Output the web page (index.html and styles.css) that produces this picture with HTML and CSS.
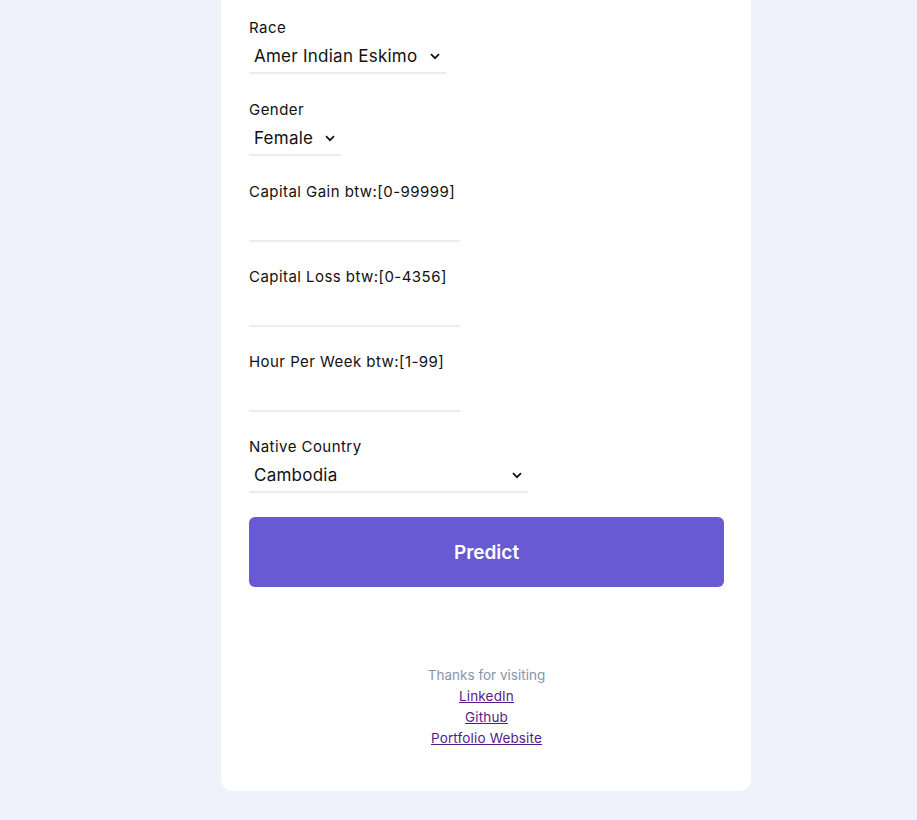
FILE: index.html
```html
<!DOCTYPE html>
<html lang="en">
<head>
<meta charset="utf-8">
<title>Income Predictor</title>
<link rel="stylesheet" href="styles.css">
</head>
<body>
<div class="page">
  <main class="card">
    <form class="form">
      <div class="field field-select">
        <label class="field-label" for="race">Race</label>
        <div class="select-wrap select-race">
          <select id="race" class="select">
            <option>Amer Indian Eskimo</option>
            <option>Asian Pac Islander</option>
            <option>Black</option>
            <option>Other</option>
            <option>White</option>
          </select>
          <svg class="chevron" viewBox="0 0 10 7" width="10" height="7"><path d="M1 1.2 L5 5.2 L9 1.2" fill="none" stroke="#111" stroke-width="1.7"/></svg>
        </div>
      </div>
      <div class="field field-select">
        <label class="field-label" for="gender">Gender</label>
        <div class="select-wrap select-gender">
          <select id="gender" class="select">
            <option>Female</option>
            <option>Male</option>
          </select>
          <svg class="chevron" viewBox="0 0 10 7" width="10" height="7"><path d="M1 1.2 L5 5.2 L9 1.2" fill="none" stroke="#111" stroke-width="1.7"/></svg>
        </div>
      </div>
      <div class="field">
        <label class="field-label" for="gain">Capital Gain btw:[0-99999]</label>
        <input id="gain" class="text-input" type="text">
      </div>
      <div class="field">
        <label class="field-label" for="loss">Capital Loss btw:[0-4356]</label>
        <input id="loss" class="text-input" type="text">
      </div>
      <div class="field">
        <label class="field-label" for="hours">Hour Per Week btw:[1-99]</label>
        <input id="hours" class="text-input" type="text">
      </div>
      <div class="field field-select field-last">
        <label class="field-label" for="country">Native Country</label>
        <div class="select-wrap select-country">
          <select id="country" class="select">
            <option>Cambodia</option>
            <option>Canada</option>
            <option>China</option>
            <option>Outlying-US(Guam-USVI-etc)</option>
          </select>
          <svg class="chevron" viewBox="0 0 10 7" width="10" height="7"><path d="M1 1.2 L5 5.2 L9 1.2" fill="none" stroke="#111" stroke-width="1.7"/></svg>
        </div>
      </div>
      <button type="button" class="predict-btn">Predict</button>
    </form>
    <footer class="footer">
      <p class="thanks">Thanks for visiting</p>
      <a class="footer-link" href="#">LinkedIn</a>
      <a class="footer-link" href="#">Github</a>
      <a class="footer-link" href="#">Portfolio Website</a>
    </footer>
  </main>
</div>
</body>
</html>
```
FILE: styles.css
```css
html, body {
  margin: 0;
  padding: 0;
}
body {
  background: #eff2fa;
  font-family: "Inter", "Noto Sans", "Liberation Sans", sans-serif;
  color: #111;
}
.page {
  padding-left: 221px;
  padding-bottom: 29px;
}
.card {
  width: 530px;
  box-sizing: border-box;
  background: #fff;
  border-radius: 0 0 12px 12px;
  padding: 18px 27px 42px 28px;
}
.form {
  display: flex;
  flex-direction: column;
}
.field {
  display: flex;
  flex-direction: column;
  align-items: flex-start;
  margin-bottom: 25px;
}
.field-select {
  margin-bottom: 26px;
}
.field-last {
  margin-bottom: 24px;
}
.field-label {
  font-size: 15px;
  line-height: 20px;
  letter-spacing: 0.45px;
  color: #111;
}
.select-wrap {
  position: relative;
  height: 36px;
  box-sizing: border-box;
  border-bottom: 2px solid #ececec;
}
.select-race { width: 197px; }
.select-gender { width: 92px; }
.select-country { width: 279px; }
.select {
  appearance: none;
  -webkit-appearance: none;
  box-sizing: border-box;
  border: none;
  outline: none;
  background: transparent;
  font-family: inherit;
  font-size: 17px;
  letter-spacing: 0.25px;
  color: #111;
  width: 100%;
  height: 34px;
  padding: 2px 0 0 5px;
  margin: 0;
}
.chevron {
  position: absolute;
  right: 6px;
  top: 15px;
  pointer-events: none;
}
.text-input {
  width: 211px;
  height: 40px;
  box-sizing: border-box;
  border: none;
  border-bottom: 2px solid #ececec;
  outline: none;
  font-family: inherit;
  font-size: 16px;
  padding: 0 5px;
  background: transparent;
}
.predict-btn {
  height: 70px;
  width: 100%;
  border: none;
  border-radius: 6px;
  background: #675ad3;
  color: #fff;
  font-family: inherit;
  font-size: 19px;
  font-weight: 600;
  cursor: pointer;
}
.footer {
  margin-top: 78px;
  display: flex;
  flex-direction: column;
  align-items: center;
  font-size: 13.5px;
  line-height: 21px;
}
.thanks {
  margin: 0;
  color: #8795aa;
}
.footer-link {
  color: #551a8b;
  text-decoration: underline;
  letter-spacing: 0.15px;
}
```
